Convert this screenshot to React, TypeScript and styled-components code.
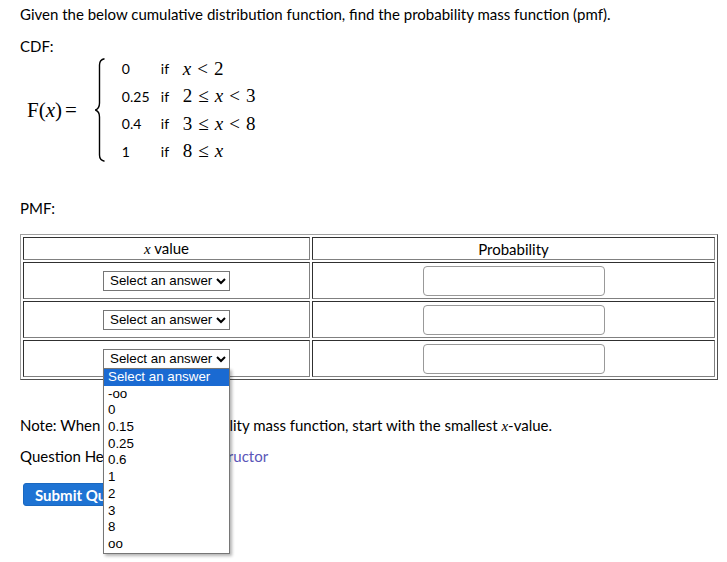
import { Fragment } from 'react';
import styled, { createGlobalStyle } from 'styled-components';

const GlobalStyle = createGlobalStyle`
  body {
    margin: 0;
    background: #fff;
    color: #000;
    font-family: Lato, "Open Sans", sans-serif;
    font-size: 15px;
  }
`;

const Page = styled.div`
  box-sizing: border-box;
  min-height: 562px;
  padding: 4px 9px 20px 20px;
  display: flex;
  flex-direction: column;
`;

const Para = styled.p<{ $top?: number }>`
  margin: ${({ $top }) => $top ?? 0}px 0 0;
  line-height: 20px;
`;

const MathBlock = styled.div`
  display: flex;
  align-items: center;
  height: 104px;
  margin-top: 2px;
  margin-left: 7px;
`;

const MathLhs = styled.span`
  font-family: "Liberation Serif", "DejaVu Serif", serif;
  font-size: 21px;
  margin-right: 15px;
`;

const Var = styled.i`
  font-family: "Liberation Serif", "DejaVu Serif", serif;
  font-style: italic;
`;

const Op = styled.span<{ $gap?: number }>`
  margin: 0 ${({ $gap }) => $gap ?? 6}px;
`;

const Cases = styled.div`
  display: grid;
  grid-template-columns: 39px 22px auto;
  grid-auto-rows: 27.5px;
  align-items: center;
  margin-left: 17px;
  font-size: 14px;
`;

const Cond = styled.span`
  font-family: "Liberation Serif", "DejaVu Serif", serif;
  font-size: 19px;
  line-height: 20px;
`;

const Table = styled.table`
  margin-top: 16px;
  width: 698px;
  border: 1px solid;
  border-color: #a0a0a0 #505050 #505050 #a0a0a0;
  border-spacing: 2px;
`;

const Th = styled.th`
  border: 1px solid;
  border-color: #303030 #808080 #808080 #303030;
  font-weight: normal;
  height: 20px;
  padding: 0;
  line-height: 20px;
`;

const Td = styled.td<{ $w?: string }>`
  border: 1px solid;
  border-color: #303030 #808080 #808080 #303030;
  height: 35px;
  padding: 0;
  text-align: center;
  vertical-align: middle;
  width: ${({ $w }) => $w ?? 'auto'};
  position: relative;
`;

const Select = styled.select`
  font-family: "Liberation Sans", Arial, sans-serif;
  font-size: 13.33px;
  height: 20px;
  width: 127px;
  padding: 0 0 0 2px;
  border: 1px solid #767676;
  border-radius: 0;
  background: #fff;
  color: #000;
`;

const Input = styled.input`
  width: 182px;
  height: 30px;
  box-sizing: border-box;
  border: 1px solid #999;
  border-radius: 4px;
  display: block;
  margin: 0 auto;
`;

const Menu = styled.ul`
  position: absolute;
  left: 79px;
  top: 27px;
  box-sizing: border-box;
  width: 127px;
  margin: 0;
  padding: 0;
  list-style: none;
  background: #fff;
  border: 1px solid #767676;
  box-shadow: 2px 2px 3px rgba(0, 0, 0, 0.3);
  text-align: left;
  z-index: 5;
  font-family: "Liberation Sans", Arial, sans-serif;
  font-size: 13.33px;
`;

const MenuItem = styled.li<{ $active?: boolean }>`
  height: 16.7px;
  line-height: 16.7px;
  padding-left: 4px;
  background: ${({ $active }) => ($active ? '#1a6ad2' : 'transparent')};
  color: ${({ $active }) => ($active ? '#fff' : '#000')};
`;

const Link = styled.a`
  color: #5a56b8;
  text-decoration: none;
  margin-left: 23px;
`;

const Button = styled.button`
  align-self: flex-start;
  margin: 17px 0 0 3px;
  height: 23px;
  padding: 0 11px;
  background: #1e73d3;
  color: #fff;
  border: 1px solid #1a68c0;
  border-radius: 3px;
  font-family: Lato, "Open Sans", sans-serif;
  font-size: 15px;
  font-weight: bold;
`;

const options = ['-oo', '0', '0.15', '0.25', '0.6', '1', '2', '3', '8', 'oo'];

const rows = [
  { v: '0', c: <><Var>x</Var><Op>&lt;</Op>2</> },
  { v: '0.25', c: <>2<Op>≤</Op><Var>x</Var><Op>&lt;</Op>3</> },
  { v: '0.4', c: <>3<Op>≤</Op><Var>x</Var><Op>&lt;</Op>8</> },
  { v: '1', c: <>8<Op>≤</Op><Var>x</Var></> },
];

function Brace() {
  return (
    <svg width="10" height="104" viewBox="0 0 10 104">
      <path
        d="M9.5 0.8 C6 1.5 4.5 3.5 4.5 7 L4.5 45 C4.5 49 3 51 0.5 52 C3 53 4.5 55 4.5 59 L4.5 97 C4.5 100.5 6 102.5 9.5 103.2"
        fill="none"
        stroke="#000"
        strokeWidth="1.4"
      />
    </svg>
  );
}

export default function App() {
  return (
    <>
      <GlobalStyle />
      <Page>
        <Para>Given the below cumulative distribution function, find the probability mass function (pmf).</Para>
        <Para $top={12}>CDF:</Para>
        <MathBlock>
          <MathLhs>
            F(<Var>x</Var>)<Op $gap={3}>=</Op>
          </MathLhs>
          <Brace />
          <Cases>
            {rows.map((r) => (
              <Fragment key={r.v}>
                <span>{r.v}</span>
                <span>if</span>
                <Cond>{r.c}</Cond>
              </Fragment>
            ))}
          </Cases>
        </MathBlock>
        <Para $top={36}>PMF:</Para>
        <Table>
          <thead>
            <tr>
              <Th>
                <Var>x</Var> value
              </Th>
              <Th>Probability</Th>
            </tr>
          </thead>
          <tbody>
            {[0, 1, 2].map((i) => (
              <tr key={i}>
                <Td $w="285px">
                  <Select defaultValue="">
                    <option value="">Select an answer</option>
                    {options.map((o) => (
                      <option key={o}>{o}</option>
                    ))}
                  </Select>
                  {i === 2 && (
                    <Menu>
                      <MenuItem $active>Select an answer</MenuItem>
                      {options.map((o) => (
                        <MenuItem key={o}>{o}</MenuItem>
                      ))}
                    </Menu>
                  )}
                </Td>
                <Td>
                  <Input type="text" />
                </Td>
              </tr>
            ))}
          </tbody>
        </Table>
        <Para $top={35}>
          Note: When writing the probability mass function, start with the smallest <Var>x</Var>-value.
        </Para>
        <Para $top={10}>
          Question Help:<Link href="#">Message instructor</Link>
        </Para>
        <Button>Submit Question</Button>
      </Page>
    </>
  );
}
